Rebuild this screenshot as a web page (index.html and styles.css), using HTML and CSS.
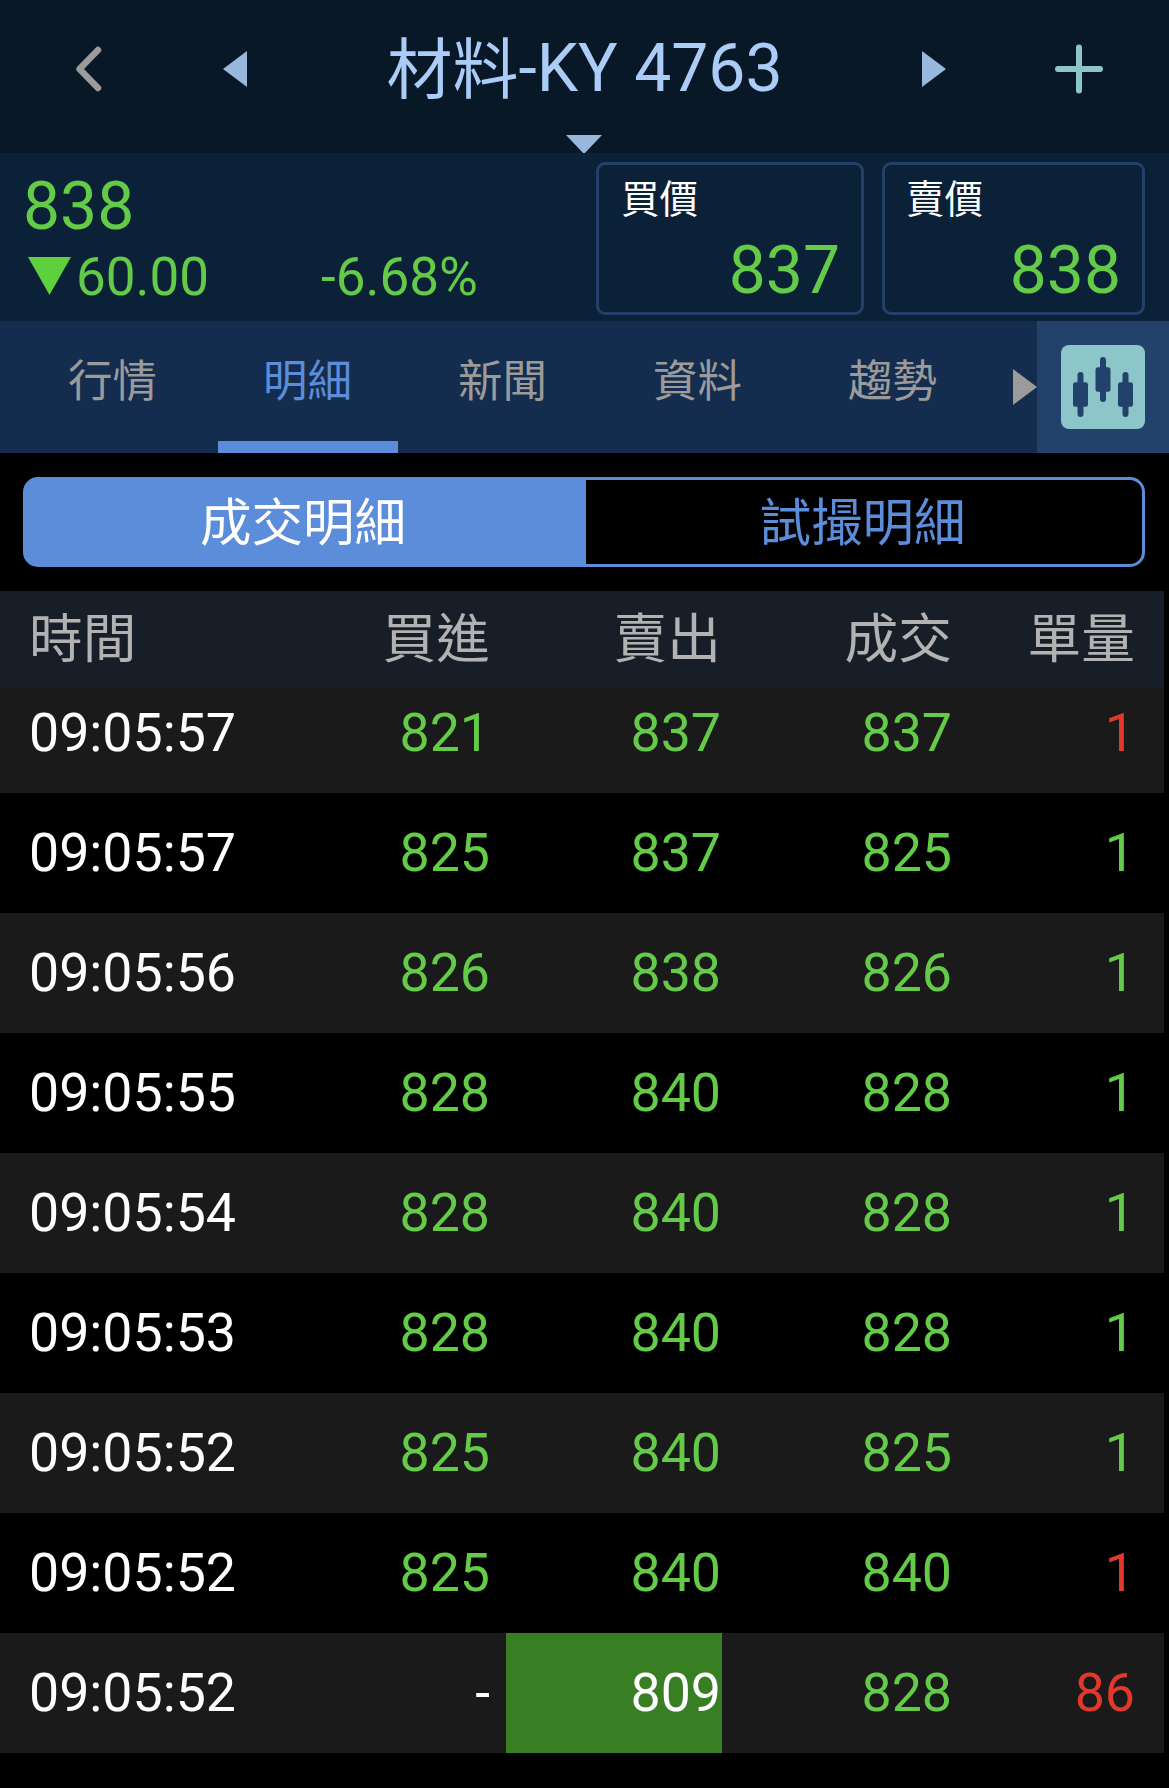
FILE: index.html
```html
<!DOCTYPE html>
<html lang="zh-Hant">
<head>
<meta charset="utf-8">
<title>材料-KY 4763</title>
<link rel="stylesheet" href="styles.css">
</head>
<body>
<header class="topbar">
  <div class="topbar-row">
    <svg class="icon" width="30" height="46" viewBox="0 0 30 46"><path d="M24 4L5.500 23L24 42" fill="none" stroke="#9b9b9b" stroke-width="6.500" stroke-linecap="round" stroke-linejoin="round"/></svg>
    <svg class="icon" width="24" height="36" viewBox="0 0 24 36"><path d="M24 0V36L0 18Z" fill="#98b9dd"/></svg>
    <h1 class="title"><span class="han">材料</span>-KY 4763</h1>
    <svg class="icon" width="24" height="36" viewBox="0 0 24 36"><path d="M0 0V36L24 18Z" fill="#98b9dd"/></svg>
    <svg class="icon" width="52" height="50" viewBox="0 0 52 50"><path d="M25 3.500V46.500M4 25H46" fill="none" stroke="#8cc6c8" stroke-width="6" stroke-linecap="round"/></svg>
  </div>
  <svg class="icon drop" width="36" height="18" viewBox="0 0 36 18"><path d="M0 0H36L18 19Z" fill="#98b9dd"/></svg>
</header>

<section class="quote">
  <div class="quote-main">
    <div class="last">838</div>
    <div class="change">
      <svg class="down" width="43" height="38" viewBox="0 0 43 38"><path d="M0 0H43L21.500 38Z" fill="#5dd03c"/></svg>
      <span class="diff">60.00</span>
      <span>-6.68%</span>
    </div>
  </div>
  <div class="price-box bid"><span class="price-label">買價</span><span class="price-value">837</span></div>
  <div class="price-box ask"><span class="price-label">賣價</span><span class="price-value">838</span></div>
</section>

<nav class="tabs">
  <a class="tab">行情</a>
  <a class="tab active">明細</a>
  <a class="tab">新聞</a>
  <a class="tab">資料</a>
  <a class="tab">趨勢</a>
  <svg class="more" width="24" height="36" viewBox="0 0 24 36"><path d="M0 0V36L24 18Z" fill="#9b9b9b"/></svg>
  <div class="chart-button">
    <svg class="icon" width="84" height="84" viewBox="0 0 84 84">
      <rect width="84" height="84" rx="8" fill="#8cc6c8"/>
      <g fill="#22426b">
        <rect x="12" y="37.300" width="15" height="24.500" rx="2.500"/><rect x="16.500" y="27" width="6" height="45" rx="3"/>
        <rect x="34.500" y="22.300" width="15" height="24.500" rx="2.500"/><rect x="39" y="12" width="6" height="45" rx="3"/>
        <rect x="57" y="37.300" width="15" height="24.500" rx="2.500"/><rect x="61.500" y="27" width="6" height="45" rx="3"/>
      </g>
    </svg>
  </div>
</nav>

<div class="segments">
  <div class="segment selected">成交明細</div>
  <div class="segment">試撮明細</div>
</div>

<main class="ticks">
  <div class="row head"><span>時間</span><span>買進</span><span>賣出</span><span>成交</span><span>單量</span></div>
  <div class="row first"><span>09:05:57</span><span>821</span><span>837</span><span>837</span><span class="up">1</span></div>
  <div class="row"><span>09:05:57</span><span>825</span><span>837</span><span>825</span><span>1</span></div>
  <div class="row"><span>09:05:56</span><span>826</span><span>838</span><span>826</span><span>1</span></div>
  <div class="row"><span>09:05:55</span><span>828</span><span>840</span><span>828</span><span>1</span></div>
  <div class="row"><span>09:05:54</span><span>828</span><span>840</span><span>828</span><span>1</span></div>
  <div class="row"><span>09:05:53</span><span>828</span><span>840</span><span>828</span><span>1</span></div>
  <div class="row"><span>09:05:52</span><span>825</span><span>840</span><span>825</span><span>1</span></div>
  <div class="row"><span>09:05:52</span><span>825</span><span>840</span><span>840</span><span class="up">1</span></div>
  <div class="row"><span>09:05:52</span><span class="flat">-</span><span class="limit">809</span><span>828</span><span class="up">86</span></div>
</main>
</body>
</html>
```
FILE: styles.css
```css
* { box-sizing: border-box; }
body {
  margin: 0;
  height: 1788px;
  overflow: hidden;
  background: #000;
  color: #fff;
  font-family: Roboto, "Noto Sans CJK TC", sans-serif;
}
.icon { display: block; }

.topbar {
  height: 153px;
  background: #091826;
  display: flex;
  flex-direction: column;
  align-items: center;
}
.topbar-row {
  width: 100%;
  height: 135px;
  padding-top: 3px;
  display: grid;
  grid-template-columns: 178px 114px 1fr 114px 178px;
  align-items: center;
  justify-items: center;
}
.title {
  margin: 0;
  font-size: 66px;
  font-weight: 400;
  line-height: 132px;
  color: #aaccf6;
  white-space: nowrap;
}
.han { line-height: 1; vertical-align: -1.5px; }
.drop { margin-right: 1px; }

.quote {
  height: 168px;
  background: #0b2137;
  display: flex;
  align-items: flex-start;
  color: #63cb47;
}
.quote-main { width: 596px; padding: 14px 0 0 23px; }
.last { font-size: 66px; line-height: 80px; }
.change { display: flex; font-size: 53px; line-height: 60px; }
.down { margin: 10px 5px 0 5px; }
.diff { width: 245px; }
.price-box {
  height: 153px;
  margin-top: 9px;
  border: 3px solid #22406a;
  border-radius: 9px;
  display: flex;
  flex-direction: column;
}
.bid { width: 268px; padding: 0 21px 0 22px; margin-right: 18px; }
.ask { width: 263px; padding: 0 21px; }
.price-label { font-size: 38.5px; line-height: 70px; color: #fff; }
.price-value { font-size: 66px; line-height: 72px; text-align: right; }

.tabs {
  height: 132px;
  background: #142c4d;
  padding-left: 15px;
  display: flex;
}
.tab {
  width: 195px;
  padding: 2px 7.5px 0;
  text-align: center;
  font-size: 44.5px;
  line-height: 118px;
  color: #9b9b9b;
}
.active { color: #5b8dda; }
.active::after { content: ""; display: block; height: 12px; background: #5b8dda; }
.more { margin: 48px 0 0 23px; }
.chart-button { width: 132px; padding: 24px; background: #22426b; }

.segments {
  height: 90px;
  margin: 24px 24px 24px 23px;
  display: flex;
  font-size: 51.5px;
  text-align: center;
  color: #5b8dda;
}
.segment {
  flex: 1;
  padding-right: 3px;
  border: 3px solid #5b8dda;
  border-left: 0;
  border-radius: 0 15px 15px 0;
  line-height: 88px;
}
.selected {
  flex: 0 0 563px;
  padding: 0 3px 0 0;
  border-left: 3px solid #5b8dda;
  border-radius: 15px 0 0 15px;
  background: #5b8dda;
  color: #fff;
}

.ticks { width: 1164px; }
.row {
  height: 120px;
  display: grid;
  grid-template-columns: 300px 190px 231px 231px 183px;
  font-size: 53.7px;
  line-height: 120px;
  text-align: right;
  color: #63cb47;
}
.row span:first-child { color: #fff; text-align: left; padding-left: 29px; }
.row:nth-child(even) { background: #1a1a1a; }
.row.head { height: 96px; line-height: 98px; background: #181e28; color: #b2b2b2; }
.row.head span:first-child { color: #b2b2b2; }
.row.first { height: 106px; line-height: 92px; }
.row .up { color: #e0392b; }
.row .flat { color: #fff; }
.row .limit { margin: 0 -1px 0 16px; padding-right: 1px; background: #377f22; color: #fff; }
```
